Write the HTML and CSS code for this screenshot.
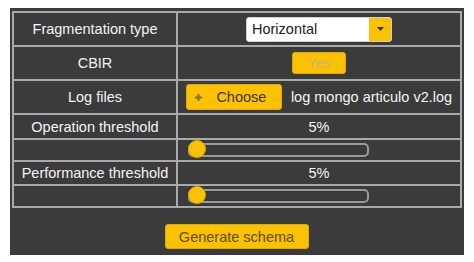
FILE: index.html
```html
<!DOCTYPE html>
<html>
<head>
<meta charset="utf-8">
<link rel="stylesheet" href="styles.css">
</head>
<body>
<div class="panel">
  <table class="form">
    <tr class="r-big">
      <td class="label">Fragmentation type</td>
      <td class="value">
        <div class="select">
          <span class="select-text">Horizontal</span>
          <span class="select-arrow"><svg width="7" height="4" viewBox="0 0 7 4"><path d="M0 0h7L3.5 4z" fill="#333"/></svg></span>
        </div>
      </td>
    </tr>
    <tr class="r-big">
      <td class="label">CBIR</td>
      <td class="value"><span class="btn btn-yes">Yes</span></td>
    </tr>
    <tr class="r-big">
      <td class="label">Log files</td>
      <td class="value">
        <div class="file-row">
          <span class="btn btn-choose"><svg class="plus" width="7" height="7" viewBox="0 0 7 7"><path d="M2.5 0h2v2.5H7v2H4.5V7h-2V4.5H0v-2h2.5z" fill="#7b6d45"/></svg>Choose</span>
          <span class="file-name">log mongo articulo v2.log</span>
        </div>
      </td>
    </tr>
    <tr class="r-mid">
      <td class="label">Operation threshold</td>
      <td class="value">5%</td>
    </tr>
    <tr class="r-slider">
      <td class="label"></td>
      <td class="value left"><div class="slider"><span class="thumb"></span></div></td>
    </tr>
    <tr class="r-mid2">
      <td class="label">Performance threshold</td>
      <td class="value">5%</td>
    </tr>
    <tr class="r-slider">
      <td class="label"></td>
      <td class="value left"><div class="slider"><span class="thumb"></span></div></td>
    </tr>
  </table>
  <div class="actions">
    <span class="btn btn-generate">Generate schema</span>
  </div>
</div>
</body>
</html>
```
FILE: styles.css
```css
html, body {
  margin: 0;
  padding: 0;
  background: #ffffff;
}
body {
  padding: 8px 0 0 10px;
  font-family: "Liberation Sans", Arial, sans-serif;
  font-size: 14.5px;
}
.panel {
  width: 454px;
  height: 247px;
  box-sizing: border-box;
  background: #3b3b3b;
  padding: 3px 2px 0 2px;
}
.form {
  width: 450px;
  border-collapse: collapse;
  color: #f4f4f4;
}
.form td {
  border: 2px solid #a9a9a9;
  padding: 0;
  text-align: center;
  vertical-align: middle;
}
.form td.label {
  width: 162px;
}
.r-big td { height: 32px; }
.r-mid td { height: 23px; }
.r-slider td { height: 20px; }
.r-mid2 td { height: 22px; }
.value.left { text-align: left; }

.select {
  display: inline-flex;
  width: 146px;
  height: 25px;
  box-sizing: border-box;
  background: #fff;
  border: 1px solid #cfcfcf;
  border-radius: 3px;
  overflow: hidden;
  vertical-align: middle;
  text-align: left;
}
.select-text {
  flex: 1;
  color: #222;
  line-height: 23px;
  padding-left: 5px;
}
.select-arrow {
  width: 22px;
  background: #fcc200;
  display: flex;
  align-items: center;
  justify-content: center;
}
.btn {
  display: inline-flex;
  align-items: center;
  justify-content: center;
  background: #fcc200;
  border-radius: 3px;
  box-sizing: border-box;
  vertical-align: middle;
}
.btn-yes {
  width: 54px;
  height: 22px;
  color: #cbb46e;
  border: 1px solid #e0aa00;
}
.file-row {
  display: flex;
  align-items: center;
  justify-content: center;
  gap: 9px;
}
.btn-choose {
  width: 96px;
  height: 26px;
  color: #3a3320;
  gap: 14px;
  border: 1px solid #e0aa00;
  padding-right: 2px;
}
.plus { margin-left: -4px; }
.file-name {
  color: #f4f4f4;
}
.slider {
  position: relative;
  width: 181px;
  height: 14px;
  box-sizing: border-box;
  margin-left: 10px;
  border: 2px solid #9a9a9a;
  border-radius: 5px;
  background: #3a3a3a;
}
.thumb {
  position: absolute;
  left: -2px;
  top: -5px;
  width: 18px;
  height: 18px;
  border-radius: 50%;
  background: #fcc200;
  border: 1px solid #d9a400;
  box-sizing: border-box;
}
.actions {
  display: flex;
  justify-content: center;
  padding-top: 16px;
}
.btn-generate {
  width: 144px;
  height: 25px;
  color: #5c4b00;
  border: 1px solid #e0aa00;
  margin-left: -1px;
}
```
